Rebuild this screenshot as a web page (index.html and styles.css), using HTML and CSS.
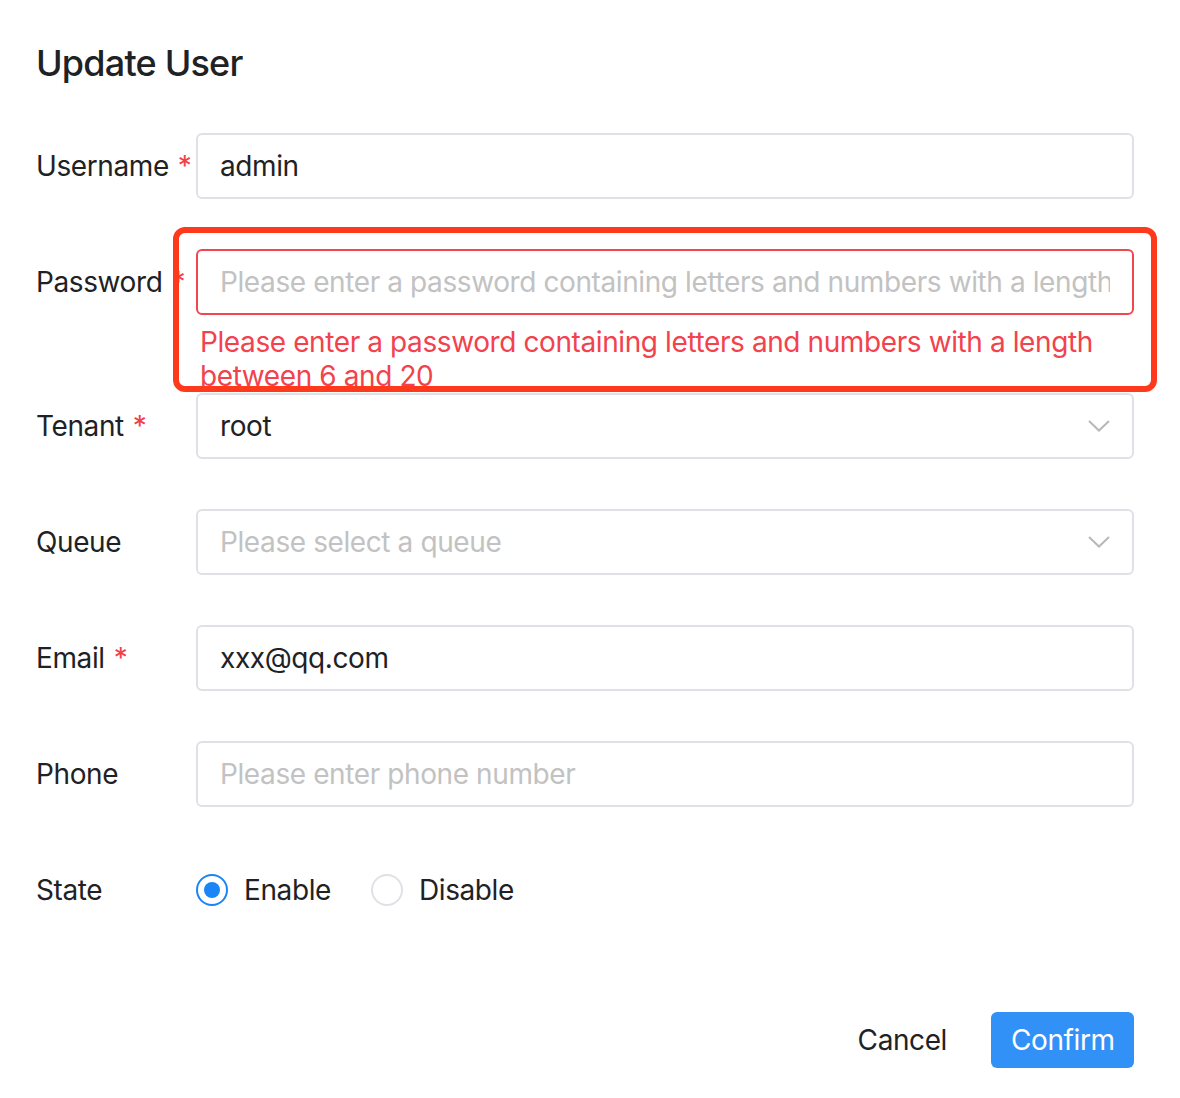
FILE: index.html
```html
<!DOCTYPE html>
<html lang="en">
<head>
<meta charset="utf-8">
<title>Update User</title>
<link rel="stylesheet" href="styles.css">
</head>
<body>
<div class="modal">
  <h1 class="title">Update User</h1>
  <form class="form">
    <div class="item">
      <label class="label">Username<span class="req">*</span></label>
      <div class="control">
        <div class="input"><span class="value">admin</span></div>
        <div class="feedback"></div>
      </div>
    </div>
    <div class="item item-error">
      <label class="label">Password<span class="req">*</span></label>
      <div class="control">
        <div class="input input-error"><span class="placeholder clip">Please enter a password containing letters and numbers with a length between 6 and 20</span></div>
        <div class="feedback error-text">Please enter a password containing letters and numbers with a length between 6 and 20</div>
      </div>
      <div class="highlight"></div>
    </div>
    <div class="item">
      <label class="label">Tenant<span class="req">*</span></label>
      <div class="control">
        <div class="input select"><span class="value">root</span>
          <svg class="chev" width="22" height="12" viewBox="0 0 22 12"><path d="M1 1 L11 10.5 L21 1" fill="none" stroke="#b8b8bc" stroke-width="2"/></svg>
        </div>
        <div class="feedback"></div>
      </div>
    </div>
    <div class="item">
      <label class="label">Queue</label>
      <div class="control">
        <div class="input select"><span class="placeholder">Please select a queue</span>
          <svg class="chev" width="22" height="12" viewBox="0 0 22 12"><path d="M1 1 L11 10.5 L21 1" fill="none" stroke="#b8b8bc" stroke-width="2"/></svg>
        </div>
        <div class="feedback"></div>
      </div>
    </div>
    <div class="item">
      <label class="label">Email<span class="req">*</span></label>
      <div class="control">
        <div class="input"><span class="value">xxx@qq.com</span></div>
        <div class="feedback"></div>
      </div>
    </div>
    <div class="item">
      <label class="label">Phone</label>
      <div class="control">
        <div class="input"><span class="placeholder">Please enter phone number</span></div>
        <div class="feedback"></div>
      </div>
    </div>
    <div class="item">
      <label class="label">State</label>
      <div class="control">
        <div class="radios">
          <span class="radio checked"><span class="dot"></span><span class="rlabel">Enable</span></span>
          <span class="radio"><span class="dot"></span><span class="rlabel">Disable</span></span>
        </div>
        <div class="feedback"></div>
      </div>
    </div>
  </form>
  <div class="footer">
    <button class="btn btn-text" type="button">Cancel</button>
    <button class="btn btn-primary" type="button">Confirm</button>
  </div>
</div>
</body>
</html>
```
FILE: styles.css
```css
html, body {
  margin: 0;
  padding: 0;
  background: #ffffff;
}
body {
  font-family: Inter, "Noto Sans", "Liberation Sans", sans-serif;
  color: #1f2225;
  font-size: 28px;
  letter-spacing: -0.4px;
}
.modal {
  width: 1098px;
  padding: 38px 46px 0 36px;
}
.title {
  margin: 0;
  font-size: 36px;
  line-height: 50px;
  font-weight: 500;
  height: 50px;
  letter-spacing: -0.8px;
}
.form {
  margin-top: 45px;
}
.item {
  display: flex;
  position: relative;
}
.label {
  width: 160px;
  flex: none;
  height: 66px;
  display: flex;
  align-items: center;
  font-size: 28px;
  line-height: 34px;
}
.req {
  color: #f2404a;
  margin-left: 9px;
  font-size: 28px;
}
.control {
  flex: 1;
  min-width: 0;
}
.input {
  height: 66px;
  box-sizing: border-box;
  border: 2px solid #e0e0e6;
  border-radius: 6px;
  padding: 0 22px;
  display: flex;
  align-items: center;
  font-size: 28px;
  overflow: hidden;
  white-space: nowrap;
}
.input-error {
  border-color: #f0474f;
}
.value {
  color: #1f2225;
}
.placeholder {
  color: #c2c2c2;
}
.clip {
  overflow: hidden;
  flex: 1;
  min-width: 0;
}
.select {
  justify-content: space-between;
}
.chev {
  flex: none;
}
.feedback {
  min-height: 50px;
}
.error-text {
  color: #f2424d;
  padding: 10px 30px 0 4px;
  box-sizing: border-box;
  line-height: 34px;
  font-size: 28px;
  min-height: 78px;
}
.highlight {
  position: absolute;
  left: 137px;
  top: -22px;
  width: 984px;
  height: 165px;
  box-sizing: border-box;
  border: 6px solid #ff3a1c;
  border-radius: 12px;
  pointer-events: none;
  z-index: 2;
}
.radios {
  height: 66px;
  display: flex;
  align-items: center;
  gap: 40px;
}
.radio {
  display: inline-flex;
  align-items: center;
}
.dot {
  width: 32px;
  height: 32px;
  box-sizing: border-box;
  border: 2px solid #e0e0e6;
  border-radius: 50%;
  position: relative;
  margin-right: 16px;
}
.checked .dot {
  border-color: #1b84f6;
}
.checked .dot::after {
  content: "";
  position: absolute;
  left: 6px;
  top: 6px;
  width: 16px;
  height: 16px;
  border-radius: 50%;
  background: #1b84f6;
}
.rlabel {
  font-size: 28px;
}
.footer {
  display: flex;
  justify-content: flex-end;
  align-items: center;
  gap: 44px;
  margin-top: 39px;
}
.btn {
  font-family: inherit;
  font-size: 28px;
  letter-spacing: -0.4px;
  border: none;
  border-radius: 6px;
  cursor: pointer;
  height: 56px;
}
.btn-text {
  background: transparent;
  color: #1f2225;
  padding: 0;
}
.btn-primary {
  background: #3291f7;
  color: #ffffff;
  padding: 0 20px;
  width: 143px;
}
```
